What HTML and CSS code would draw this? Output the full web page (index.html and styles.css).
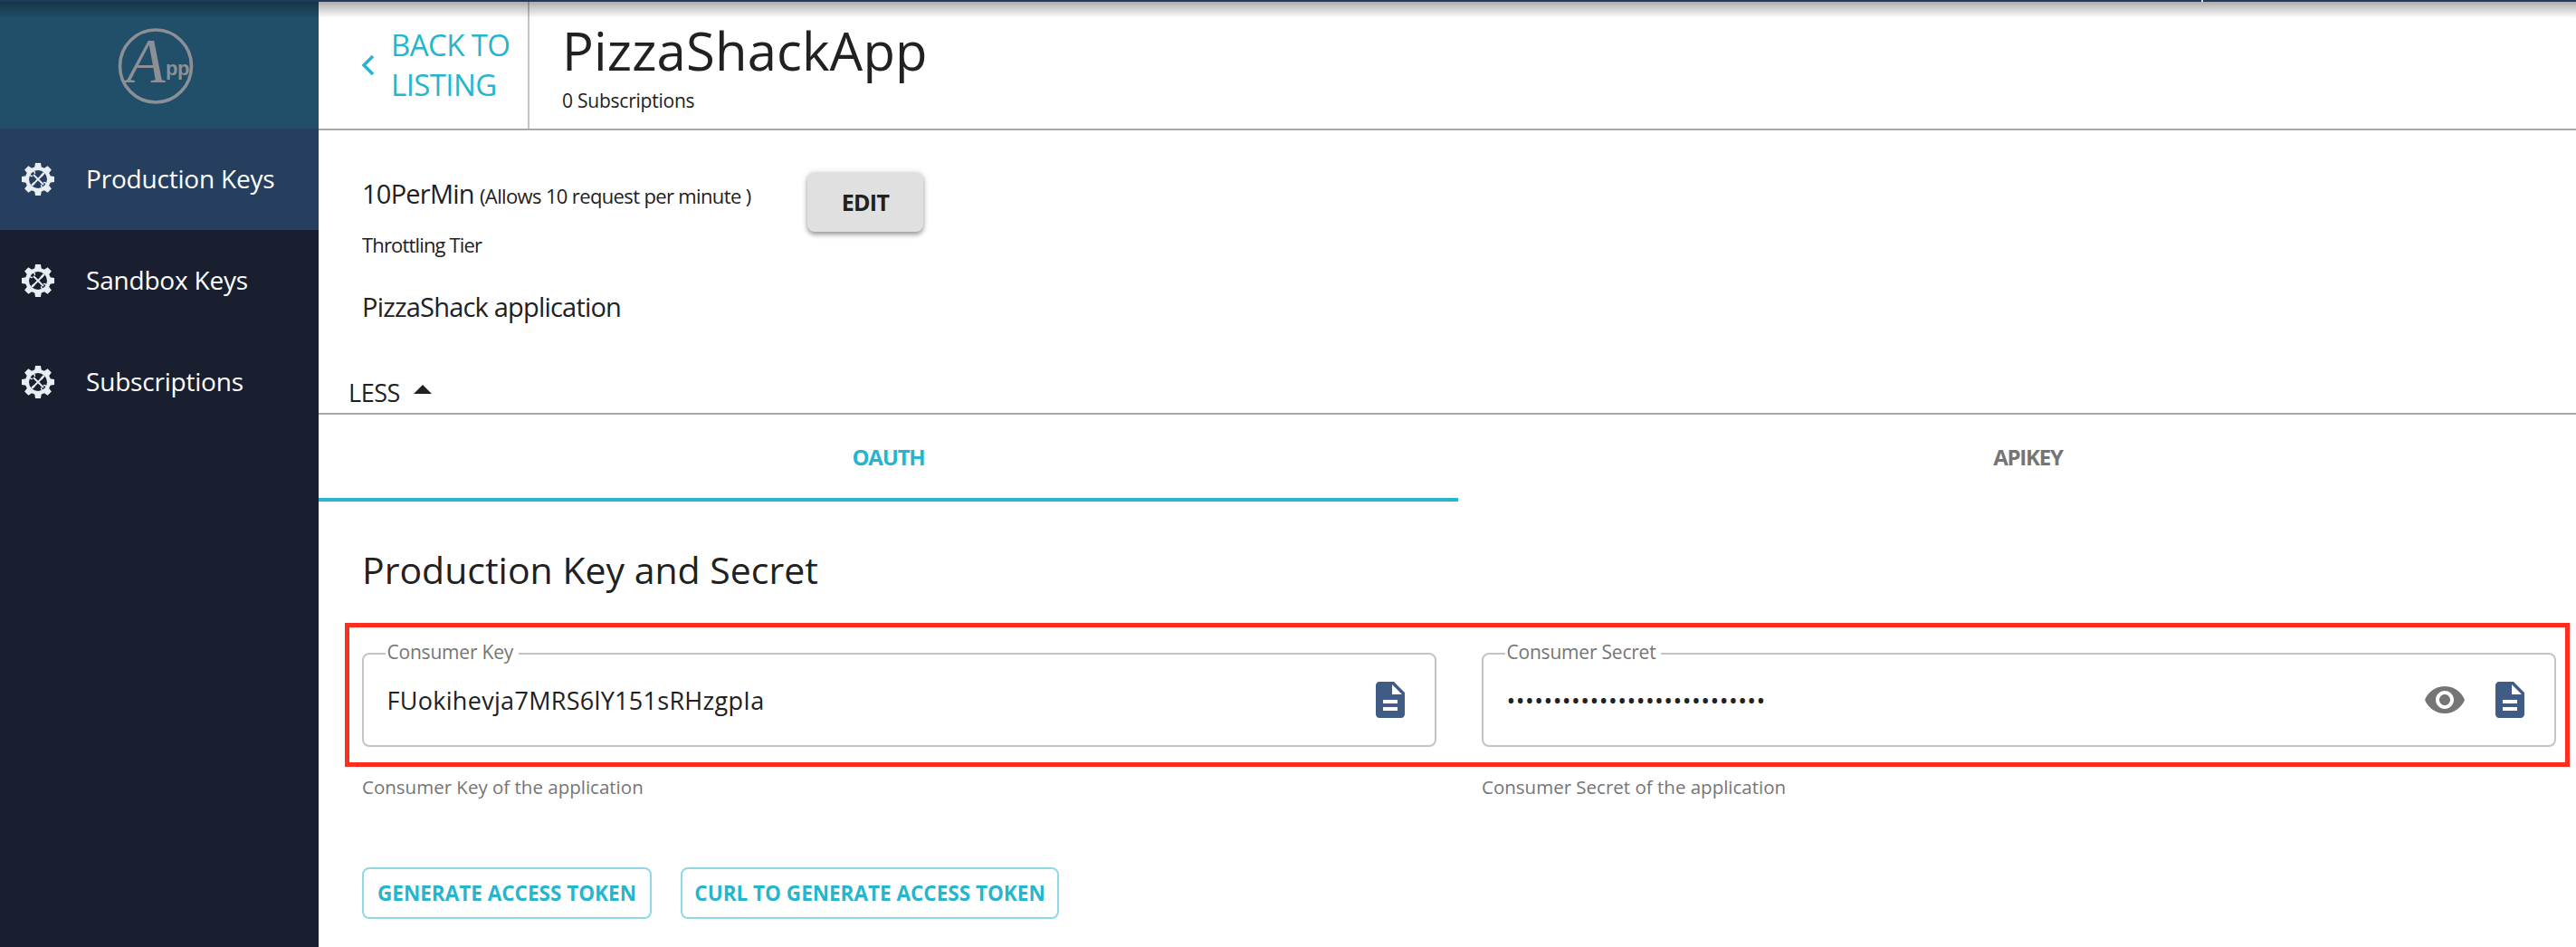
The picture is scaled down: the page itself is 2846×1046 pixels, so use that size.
FILE: index.html
```html
<!DOCTYPE html>
<html lang="en">
<head>
<meta charset="utf-8">
<title>PizzaShackApp</title>
<link rel="stylesheet" href="styles.css">
</head>
<body>
<svg class="defs" width="0" height="0" aria-hidden="true">
  <symbol id="gear" viewBox="0 0 36 36">
    <g fill="#e9eef2">
      <path d="M15 0h6l.8 5h-7.600z"/>
      <path d="M15 0h6l.8 5h-7.600z" transform="rotate(45 18 18)"/>
      <path d="M15 0h6l.8 5h-7.600z" transform="rotate(90 18 18)"/>
      <path d="M15 0h6l.8 5h-7.600z" transform="rotate(135 18 18)"/>
      <path d="M15 0h6l.8 5h-7.600z" transform="rotate(180 18 18)"/>
      <path d="M15 0h6l.8 5h-7.600z" transform="rotate(225 18 18)"/>
      <path d="M15 0h6l.8 5h-7.600z" transform="rotate(270 18 18)"/>
      <path d="M15 0h6l.8 5h-7.600z" transform="rotate(315 18 18)"/>
    </g>
    <circle cx="18" cy="18" r="12" fill="none" stroke="#e9eef2" stroke-width="4"/>
    <g fill="none" stroke="#e9eef2" stroke-linecap="round">
      <path d="M13.500 13.500 23.500 23.500" stroke-width="1.800"/>
      <path d="M22.500 13.500 12.500 23.500" stroke-width="1.800"/>
      <path d="M14.500 11.500a3 3 0 1 0-3 3" stroke-width="1.300"/>
      <path d="M21.500 24.500a3 3 0 1 0 3-3" stroke-width="1.300"/>
      <path d="M22 14l2-2.500" stroke-width="2.400"/>
      <path d="M11.800 24.200l1.400-1.400" stroke-width="2.400"/>
    </g>
  </symbol>
  <symbol id="doc" viewBox="0 0 24 24">
    <path fill="#3f5b86" d="M14 2H6c-1.100 0-2 .9-2 2v16c0 1.100.9 2 2 2h12c1.100 0 2-.9 2-2V8l-6-6zm2 16H8v-2h8v2zm0-4H8v-2h8v2zm-3-5V3.500L18.500 9H13z"/>
  </symbol>
  <symbol id="eye" viewBox="0 0 24 24">
    <path fill="#757575" d="M12 4.500C7 4.500 2.730 7.610 1 12c1.730 4.390 6 7.500 11 7.500s9.270-3.110 11-7.500c-1.730-4.390-6-7.500-11-7.500zM12 17c-2.760 0-5-2.240-5-5s2.240-5 5-5 5 2.240 5 5-2.240 5-5 5zm0-8c-1.660 0-3 1.340-3 3s1.340 3 3 3 3-1.340 3-3-1.340-3-3-3z"/>
  </symbol>
</svg>

<div class="topstrip"><span class="topstrip-tick"></span></div>

<div class="app">
  <aside class="sidebar">
    <div class="brand">
      <svg class="brand-logo" width="86" height="86" viewBox="0 0 86 86" role="img" aria-label="App">
        <ellipse cx="43" cy="43" rx="39.500" ry="40" fill="none" stroke="#8b9097" stroke-width="3.600"/>
        <text class="logo-a" x="11" y="61">A</text>
        <text class="logo-pp" x="54" y="53">pp</text>
      </svg>
    </div>
    <nav class="nav">
      <a class="nav-item is-active"><svg class="nav-icon"><use href="#gear"/></svg><span>Production Keys</span></a>
      <a class="nav-item"><svg class="nav-icon"><use href="#gear"/></svg><span>Sandbox Keys</span></a>
      <a class="nav-item"><svg class="nav-icon"><use href="#gear"/></svg><span>Subscriptions</span></a>
    </nav>
  </aside>

  <main class="main">
    <header class="header">
      <a class="back">
        <svg class="back-chevron" width="16" height="24" viewBox="0 0 16 24"><path d="M13 2 3 12l10 10" fill="none" stroke="#26b5cc" stroke-width="3.500"/></svg>
        <span class="back-label">BACK TO<br>LISTING</span>
      </a>
      <div class="title-block">
        <h1 class="title">PizzaShackApp</h1>
        <div class="subs">0 Subscriptions</div>
      </div>
    </header>

    <section class="summary">
      <div class="summary-top">
        <div class="tier-block">
          <div class="tier"><span class="tier-name">10PerMin</span> <span class="tier-desc">(Allows 10 request per minute )</span></div>
          <div class="tier-label">Throttling Tier</div>
        </div>
        <button class="edit" type="button">EDIT</button>
      </div>
      <div class="description">PizzaShack application</div>
      <div class="less"><span>LESS</span><span class="less-arrow"></span></div>
    </section>

    <div class="tabs">
      <div class="tab is-active">OAUTH</div>
      <div class="tab">APIKEY</div>
    </div>

    <section class="panel">
      <h2 class="panel-title">Production Key and Secret</h2>
      <div class="highlight">
        <fieldset class="field">
          <legend class="field-legend">Consumer Key</legend>
          <div class="field-row">
            <span class="field-value">FUokihevja7MRS6lY151sRHzgpIa</span>
            <svg class="icon"><use href="#doc"/></svg>
          </div>
        </fieldset>
        <fieldset class="field">
          <legend class="field-legend">Consumer Secret</legend>
          <div class="field-row">
            <span class="field-value field-secret">••••••••••••••••••••••••••••</span>
            <svg class="icon"><use href="#eye"/></svg>
            <svg class="icon"><use href="#doc"/></svg>
          </div>
        </fieldset>
      </div>
      <div class="helpers">
        <div>Consumer Key of the application</div>
        <div>Consumer Secret of the application</div>
      </div>
      <div class="actions">
        <button class="outline outline-gen" type="button">GENERATE ACCESS TOKEN</button>
        <button class="outline outline-curl" type="button">CURL TO GENERATE ACCESS TOKEN</button>
      </div>
    </section>
  </main>
</div>
</body>
</html>
```

FILE: styles.css
```css
* { box-sizing: border-box; }
html, body { margin: 0; width: 2846px; height: 1046px; overflow: hidden; background: #fff; }
body { font-family: "Open Sans", "Liberation Sans", sans-serif; color: #212121; }
.defs { position: absolute; }

.topstrip { height: 2px; background: #1f3a5a; position: relative; }
.topstrip-tick { position: absolute; left: 2432px; top: 0; width: 2px; height: 2px; background: #ddd; }

.app { display: flex; height: 1044px; position: relative; }
.app::before {
  content: ""; position: absolute; left: 0; right: 0; top: 0; height: 18px; pointer-events: none;
  background: linear-gradient(to bottom, rgba(0,0,0,.32), rgba(0,0,0,0));
}

.sidebar { width: 352px; flex: none; background: #191f2e; }
.brand { height: 140px; background: #214e69; display: flex; justify-content: center; align-items: center; }
.brand-logo { display: block; margin-top: 2px; margin-left: -8px; }
.logo-a { font-family: "Liberation Serif", serif; font-style: italic; font-size: 70px; fill: #8b9097; }
.logo-pp { font-family: "Liberation Sans", sans-serif; font-weight: 700; font-size: 22px; letter-spacing: -.5px; fill: #8b9097; }
.nav-item { display: flex; align-items: center; height: 112px; padding: 0 0 2px 24px; color: #fff; font-size: 28px; letter-spacing: -.2px; }
.nav-item.is-active { background: #263f5f; }
.nav-icon { width: 36px; height: 36px; margin: 2px 35px 0 0; flex: none; }

.main { flex: 1; min-width: 0; overflow: hidden; }

.header { display: flex; height: 142px; border-bottom: 2px solid #a8a8a8; }
.back { width: 233px; flex: none; display: flex; align-items: center; padding-left: 47px; border-right: 2px solid #c4c4c4; color: #26b5cc; font-size: 33px; line-height: 44px; letter-spacing: -.6px; }
.back-chevron { flex: none; margin-right: 17px; }
.title-block { padding-left: 36px; }
.title { margin: 22px 0 0; font-size: 58px; font-weight: 400; line-height: 64px; letter-spacing: .16px; }
.subs { margin-top: 8px; font-size: 21px; line-height: 30px; letter-spacing: -.23px; }

.summary { height: 314px; padding: 46px 0 0 48px; border-bottom: 2px solid #a8a8a8; }
.summary-top { display: flex; align-items: flex-start; }
.tier-block { width: 492px; flex: none; }
.tier { line-height: 48px; }
.tier-name { font-size: 29px; letter-spacing: -.76px; }
.tier-desc { margin-left: 2px; font-size: 22px; letter-spacing: -.64px; }
.tier-label { margin-top: 12px; font-size: 22px; line-height: 30px; letter-spacing: -.84px; }
.edit {
  width: 128px; height: 66px; border: 0; border-radius: 8px; background: #e0e0e0;
  font: 700 25px "Open Sans", sans-serif; letter-spacing: -.75px; color: #212121;
  box-shadow: 0 3px 5px rgba(0,0,0,.35), 0 1px 8px rgba(0,0,0,.12);
}
.description { margin-top: 34px; font-size: 29px; line-height: 40px; letter-spacing: -.8px; }
.less { display: flex; align-items: center; margin: 58px 0 0 -15px; font-size: 27px; line-height: 34px; letter-spacing: -.46px; }
.less-arrow { width: 0; height: 0; margin: -8px 0 0 15px; border-left: 10px solid transparent; border-right: 10px solid transparent; border-bottom: 10px solid #212121; }

.tabs { display: flex; width: 2518px; }
.tab { width: 1259px; height: 96px; display: flex; align-items: center; justify-content: center; border-bottom: 4px solid transparent; font-size: 24px; font-weight: 700; letter-spacing: -1.2px; color: #757575; }
.tab.is-active { color: #26b5cc; border-bottom-color: #26b5cc; }

.panel-title { margin: 47px 0 31px 48px; font-size: 41px; font-weight: 400; line-height: 56px; }

.highlight {
  display: grid; grid-template-columns: 1fr 1fr; column-gap: 50px;
  margin: 0 7px 0 29px; padding: 15px 10px 17px 14px; border: 5px solid #ff2d20;
}
.field { margin: 0; min-width: 0; padding: 0 25px 13px 25.500px; border: 2px solid #c4c4c4; border-radius: 8px; }
.field-legend { position: relative; top: -2px; margin-left: -2px; padding: 0 6px 0 2px; font-size: 21px; line-height: 28px; letter-spacing: -.21px; color: #757575; }
.field-row { display: flex; align-items: center; gap: 24px; height: 74px; }
.field-value { flex: 1; font-size: 27px; letter-spacing: .3px; }
.field-secret { font-size: 26px; letter-spacing: .45px; }
.icon { width: 48px; height: 48px; flex: none; }

.helpers { display: grid; grid-template-columns: 1fr 1fr; column-gap: 50px; margin: 7px 22px 0 48px; font-size: 20.500px; line-height: 30px; color: #757575; }

.actions { display: flex; gap: 32px; margin: 74px 0 0 48px; }
.outline { height: 57px; padding: 0; background: #fff; border: 2px solid #8fd8e5; border-radius: 8px; color: #26b5cc; font: 700 22.500px "Open Sans", sans-serif; }
.outline-gen { width: 320px; }
.outline-curl { width: 418px; }
```
